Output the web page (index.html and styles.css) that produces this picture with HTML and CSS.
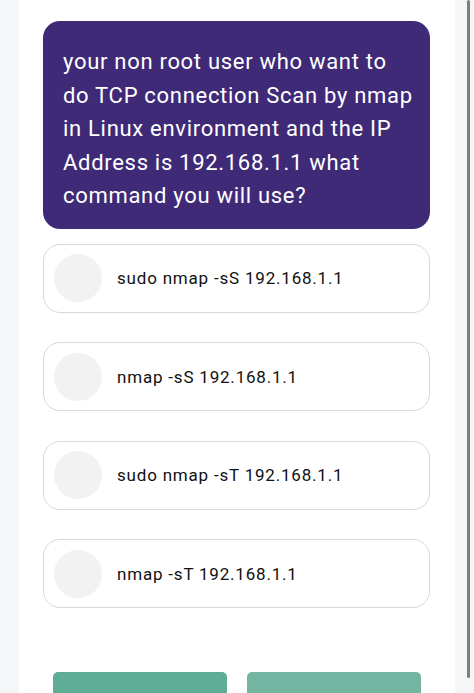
FILE: index.html
```html
<!DOCTYPE html>
<html lang="en">
<head>
<meta charset="utf-8">
<title>Quiz</title>
<link rel="stylesheet" href="styles.css">
</head>
<body>
<div class="page">
  <main class="panel">
    <div class="question">your non root user who want to do TCP connection Scan by nmap in Linux environment and the IP Address is 192.168.1.1 what command you will use?</div>
    <ul class="options">
      <li class="option"><span class="radio"></span><span class="label">sudo nmap -sS 192.168.1.1</span></li>
      <li class="option"><span class="radio"></span><span class="label">nmap -sS 192.168.1.1</span></li>
      <li class="option"><span class="radio"></span><span class="label">sudo nmap -sT 192.168.1.1</span></li>
      <li class="option"><span class="radio"></span><span class="label">nmap -sT 192.168.1.1</span></li>
    </ul>
    <div class="actions">
      <button class="btn btn-primary" type="button"></button>
      <button class="btn btn-secondary" type="button"></button>
    </div>
  </main>
  <div class="scrollbar"></div>
</div>
</body>
</html>
```
FILE: styles.css
```css
* { box-sizing: border-box; }
html, body { margin: 0; padding: 0; }
body {
  background: #f5f6f8;
  font-family: Roboto, "Liberation Sans", sans-serif;
  height: 693px;
  overflow: hidden;
}
.page {
  position: relative;
  display: flex;
  padding-left: 19px;
  height: 693px;
}
.panel {
  width: 436px;
  background: #ffffff;
  padding: 21px 25px 0 24px;
  display: flex;
  flex-direction: column;
}
.question {
  background: #3f2a78;
  color: #ffffff;
  border-radius: 17px;
  padding: 24px 16px 16px 20px;
  font-size: 22px;
  line-height: 33.5px;
  letter-spacing: 0.7px;
}
.options {
  list-style: none;
  margin: 15px 0 0 0;
  padding: 0;
  display: flex;
  flex-direction: column;
  gap: 29.5px;
}
.option {
  display: flex;
  align-items: center;
  gap: 15px;
  height: 69px;
  padding: 0 10px;
  border: 1px solid #d8d8d8;
  border-radius: 17px;
  background: #ffffff;
}
.radio {
  width: 48px;
  height: 48px;
  border-radius: 50%;
  background: #f2f2f2;
  flex: none;
}
.label {
  font-size: 17px;
  letter-spacing: 0.8px;
  color: #111111;
}
.actions {
  display: flex;
  justify-content: center;
  gap: 20px;
  margin-top: 64px;
}
.btn {
  width: 174px;
  height: 44px;
  border: none;
  border-radius: 5px;
  padding: 0;
}
.btn-primary { background: #5fad96; }
.btn-secondary { background: #74b5a2; }
.scrollbar {
  position: absolute;
  left: 467px;
  top: 0;
  width: 3px;
  height: 678px;
  background: #7d7d7d;
  border-radius: 2px;
}
```
